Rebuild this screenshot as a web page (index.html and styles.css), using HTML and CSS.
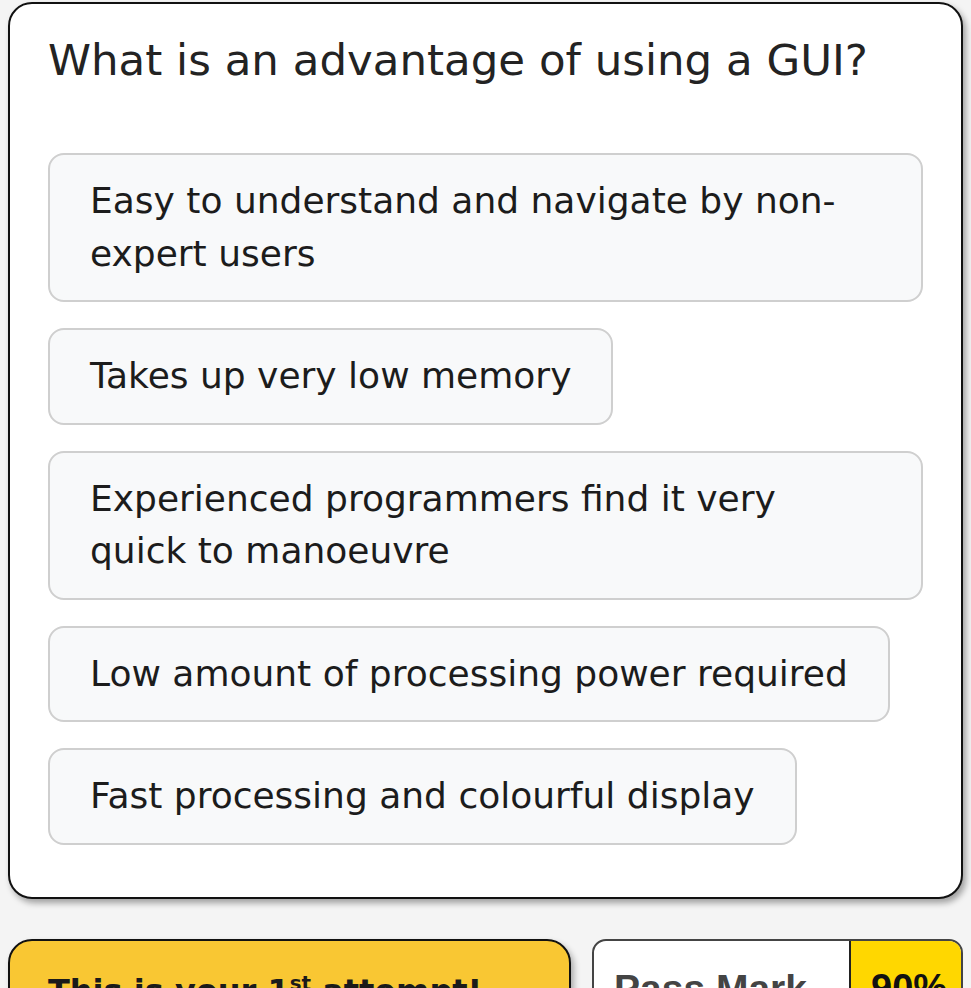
FILE: index.html
```html
<!DOCTYPE html>
<html lang="en">
<head>
  <meta charset="UTF-8">
  <meta name="viewport" content="width=device-width, initial-scale=1.0">
  <title>Quiz</title>
  <link rel="stylesheet" href="styles.css">
</head>

<body>
  <div class="card">
    <h1 class="question">What is an advantage of using a GUI?</h1>

    <div class="answers">
      <div class="answer">Easy to understand and navigate by non-expert users</div>
      <div class="answer">Takes up very low memory</div>
      <div class="answer">Experienced programmers find it very quick to manoeuvre</div>
      <div class="answer">Low amount of processing power required</div>
      <div class="answer">Fast processing and colourful display</div>
    </div>
  </div>

  <div class="footer">
    <div class="attempt">This is your 1<sup>st</sup> attempt!</div>
    <div class="pass">
      <div class="pass-label">Pass Mark</div>
      <div class="pass-value">90%</div>
    </div>
  </div>
</body>
</html>
```

FILE: styles.css
```css
* {
  box-sizing: border-box;
}

body {
  font-family: 'DejaVu Sans', sans-serif;
  background: #f4f4f4;
  margin: 0;
  padding: 2px 8px 0;
  color: #222;
}

.card {
  background: #fff;
  border: 2px solid #111;
  border-radius: 24px;
  padding: 30px 38px 52px;
  box-shadow: 3px 4px 6px rgba(0, 0, 0, 0.35);
}

.question {
  font-size: 43.5px;
  font-weight: normal;
  line-height: 1.2;
  margin: 0 0 67px;
  color: #232323;
}

.answers {
  display: flex;
  flex-direction: column;
  align-items: flex-start;
  gap: 26px;
}

.answer {
  font-size: 36px;
  line-height: 52.5px;
  padding: 20px 40px;
  background: #f8f9fa;
  border: 2px solid #cfcfcf;
  border-radius: 16px;
  color: #1c1c1c;
}

.footer {
  display: grid;
  grid-template-columns: 563px 1fr;
  gap: 21px;
  margin-top: 40px;
}

.attempt {
  background: #f9c733;
  border: 2px solid #111;
  border-radius: 24px;
  padding: 31px 38px 29px;
  font-size: 32px;
  font-weight: bold;
  line-height: 1.2;
  color: #1a1a1a;
  box-shadow: 3px 4px 6px rgba(0, 0, 0, 0.3);
}

.attempt sup {
  font-size: 0.62em;
  line-height: 0;
}

.pass {
  display: flex;
  border: 2px solid #444;
  border-radius: 14px;
  overflow: hidden;
  background: #fff;
  font-family: 'Liberation Sans', Arial, sans-serif;
  font-weight: bold;
}

.pass-label {
  flex: 1;
  padding: 26px 20px;
  font-size: 39px;
  color: #444;
}

.pass-value {
  width: 112px;
  background: #ffd700;
  border-left: 2px solid #222;
  padding: 26px 0 26px 20px;
  font-size: 38px;
  color: #111;
}
```
